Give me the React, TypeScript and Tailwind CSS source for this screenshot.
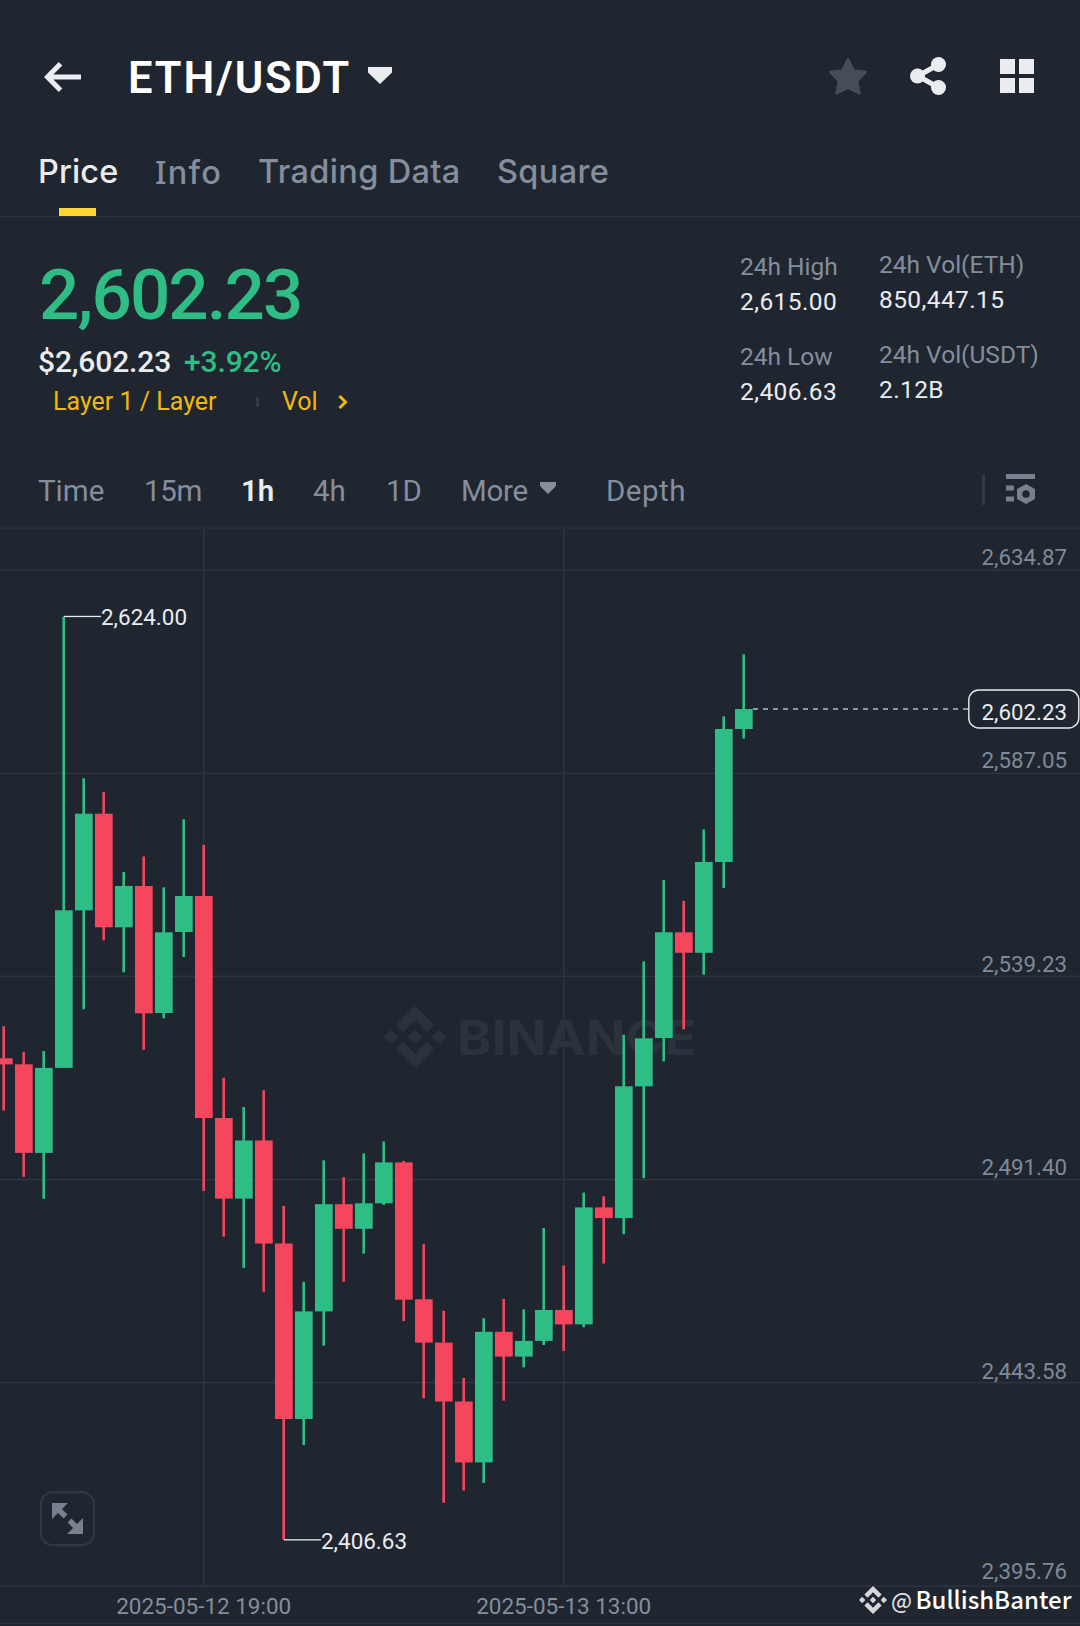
import { clsx } from 'clsx';

type Candle = {
  up: boolean;
  high: number;
  low: number;
  top: number;
  bottom: number;
};

const UP = '#2ebd85';
const DOWN = '#f6465d';

const CANDLE_STEP = 20;
const CANDLE_WIDTH = 17.7;

// [direction, high, low, body top, body bottom] in canvas units
const RAW: [number, number, number, number, number][] = [
  [0, 1026.3, 1110.6, 1058.3, 1064.4],
  [0, 1051.9, 1176.8, 1064.3, 1152.9],
  [1, 1051.1, 1198.8, 1067.9, 1152.9],
  [1, 616.5, 1067.9, 910.3, 1067.9],
  [1, 778.3, 1009.3, 813.7, 910.3],
  [0, 792, 940.3, 813.7, 927.3],
  [1, 872, 972.3, 886, 927.3],
  [0, 856.5, 1049.9, 886, 1013.3],
  [1, 887.3, 1018.3, 932.3, 1013],
  [1, 819.2, 957, 896, 932],
  [0, 845, 1190.8, 896, 1118],
  [0, 1077.8, 1236.7, 1118, 1198.6],
  [1, 1107, 1267.9, 1140.5, 1198.6],
  [0, 1090.2, 1291.8, 1140.5, 1243.5],
  [0, 1206, 1540, 1243.5, 1419],
  [1, 1281.8, 1445.1, 1311.4, 1419],
  [1, 1160.4, 1345.7, 1204.2, 1311.4],
  [0, 1177.2, 1281.8, 1204.2, 1228.8],
  [1, 1153.4, 1253.6, 1203.3, 1228.8],
  [1, 1141.5, 1205, 1162.4, 1203.3],
  [0, 1160.9, 1321.1, 1162.4, 1299.7],
  [0, 1244.1, 1398.2, 1299.3, 1342.6],
  [0, 1310.8, 1502.8, 1342.6, 1401.5],
  [0, 1378, 1490.5, 1401.5, 1462.4],
  [1, 1318.2, 1483, 1331.8, 1462.4],
  [0, 1298.9, 1400.6, 1331.8, 1356.6],
  [1, 1309.4, 1367.3, 1340.9, 1356.6],
  [1, 1228, 1345, 1310, 1340.9],
  [0, 1265.5, 1350.8, 1310, 1324.4],
  [1, 1192.6, 1327.3, 1207.4, 1324.4],
  [0, 1196.3, 1263.5, 1207.4, 1218.1],
  [1, 1034.8, 1234.2, 1086.3, 1218.1],
  [1, 961.3, 1178.2, 1038.3, 1086.3],
  [1, 880, 1061.3, 932.3, 1038],
  [0, 901, 1029.3, 932.3, 952.8],
  [1, 829.3, 974.7, 862, 952.8],
  [1, 716.3, 888, 729, 862],
  [1, 654.3, 738.7, 709, 729],
];

const CANDLES: Candle[] = RAW.map(([dir, high, low, top, bottom]) => ({
  up: dir === 1,
  high,
  low,
  top,
  bottom,
}));

const PRICE_LINES = [
  { y: 570, label: '2,634.87', baseline: 565 },
  { y: 773.3, label: '2,587.05', baseline: 768.2 },
  { y: 976.3, label: '2,539.23', baseline: 972 },
  { y: 1179.6, label: '2,491.40', baseline: 1175.3 },
  { y: 1382.6, label: '2,443.58', baseline: 1378.6 },
  { y: 1586, label: '2,395.76', baseline: 1579.2 },
];

const TIME_LINES = [
  { x: 203.7, label: '2025-05-12 19:00' },
  { x: 563.7, label: '2025-05-13 13:00' },
];

const INTERVALS = [
  { label: 'Time', className: 'w-[106px]' },
  { label: '15m', className: 'w-[97px] tracking-[-0.3px]' },
  { label: '1h', className: 'w-[72px]' },
  { label: '4h', className: 'w-[73px]' },
  { label: '1D', className: 'w-[75px]' },
];

function Header() {
  return (
    <header className="flex h-[153px] items-center pl-11 pr-[46px]">
      <svg className="h-[30px] w-[38px]" viewBox="0 0 38 30" fill="none" stroke="#eaecef" strokeWidth="5">
        <path d="M37 15H4M16.5 1.8L3.5 15l13 13.2" />
      </svg>
      <h1 className="ml-[46px] mt-[5px] text-[43.5px] font-semibold leading-none tracking-[1.9px] text-white">ETH/USDT</h1>
      <svg className="-mt-0.5 ml-[17px] h-[17px] w-6" viewBox="0 0 24 17" fill="#eaecef">
        <path d="M0 0h24v5.5L12 17 0 5.5z" />
      </svg>
      <div className="-mt-px ml-auto flex items-center">
        <svg className="h-[38px] w-[38px]" viewBox="0 0 38 38" fill="#474d57" stroke="#474d57" strokeWidth="2.4" strokeLinejoin="round">
          <path d="M19 2l5.6 11.4 12.2 1.5-8.6 9.2 2.3 12.4L19 31 7.5 36.5l2.3-12.4L1.200 14.900l12.200-1.500z" />
        </svg>
        <svg className="-mt-px ml-[43px] h-[38px] w-[37px]" viewBox="0 0 37 38" fill="#eaecef">
          <path d="M28.5 7.5L8 19l20.5 11.5" fill="none" stroke="#eaecef" strokeWidth="5" />
          <circle cx="28.5" cy="7.5" r="7.5" />
          <circle cx="7.5" cy="19" r="7.5" />
          <circle cx="28.5" cy="30.5" r="7.5" />
        </svg>
        <div className="ml-[53px] grid grid-cols-2 gap-1">
          <span className="size-[15px] bg-[#eaecef]" />
          <span className="size-[15px] bg-[#eaecef]" />
          <span className="size-[15px] bg-[#eaecef]" />
          <span className="size-[15px] bg-[#eaecef]" />
        </div>
      </div>
    </header>
  );
}

function Tabs() {
  return (
    <nav className="flex h-16 whitespace-nowrap border-b border-[#2f3641] pl-[38px] pt-[3px] font-['Inter',sans-serif] text-[32.5px] font-medium leading-8 tracking-[0.35px] text-[#848e9c]">
      <div className="flex w-[117px] flex-col text-[#eaecef]">
        <span className="tracking-[0.1px]">Price</span>
        <span className="ml-[21px] mt-auto h-2 w-[37px] bg-[#fcd535]" />
      </div>
      <div className="w-[103px] tracking-[1.2px]">
        {/* serifed capital I */}
        <span className="font-['Noto_Sans',sans-serif] leading-none">I</span>nfo
      </div>
      <div className="w-[239px]">Trading Data</div>
      <div>Square</div>
    </nav>
  );
}

function Stat({ label, value }: { label: string; value: string }) {
  return (
    <div className="whitespace-nowrap text-[24.5px] leading-[35px]">
      <div className="text-[#848e9c]">{label}</div>
      <div className="tracking-[0.4px] text-[#eaecef]">{value}</div>
    </div>
  );
}

function Summary() {
  return (
    <section className="flex h-[237px]">
      <div className="w-[740px] pl-[38px] pt-[43px]">
        <div className="ml-px text-[71px] font-medium leading-[70px] tracking-[-1.9px] text-[#2ebd85]">2,602.23</div>
        <div className="mt-3.5 flex gap-[13px] text-[30px] font-medium leading-9 tracking-[-0.15px]">
          <span className="text-[#eaecef]">$2,602.23</span>
          <span className="text-[#2ebd85]">+3.92%</span>
        </div>
        <div className="mt-1 flex items-center pl-[15px] text-[25px] leading-9 text-[#f0b90b]">
          <span className="w-[203px]">Layer 1 / Layer</span>
          <span className="mr-[23px] h-2.5 w-[3px] bg-[#333b47]" />
          <span className="w-[56px]">Vol</span>
          <svg className="h-[14px] w-[10px]" viewBox="0 0 10 14" fill="none" stroke="#f0b90b" strokeWidth="3">
            <path d="M1.5 1l6 6-6 6" />
          </svg>
        </div>
      </div>
      <div className="flex w-[139px] flex-col gap-5 pt-8">
        <Stat label="24h High" value="2,615.00" />
        <Stat label="24h Low" value="2,406.63" />
      </div>
      <div className="flex flex-col gap-5 pt-[30px]">
        <Stat label="24h Vol(ETH)" value="850,447.15" />
        <Stat label="24h Vol(USDT)" value="2.12B" />
      </div>
    </section>
  );
}

function IntervalBar() {
  return (
    <div className="flex h-[75px] items-center border-b-[3px] border-[#272d38] pl-[38px] text-[29.5px] leading-9 text-[#848e9c]">
      {INTERVALS.map((item) => (
        <span
          key={item.label}
          className={clsx('mt-0.5', item.className, item.label === '1h' && 'font-semibold text-[#eaecef]')}
        >
          {item.label}
        </span>
      ))}
      <span className="mt-0.5 w-[79px] tracking-[-0.3px]">More</span>
      <svg className="-mt-1 h-3 w-4" viewBox="0 0 16 12" fill="#848e9c">
        <path d="M0 0h16v4L8 12 0 4z" />
      </svg>
      <span className="ml-[50px] mt-0.5 tracking-[0.5px]">Depth</span>
      <div className="ml-auto flex items-center gap-[21px] pr-[45px]">
        <span className="h-[30px] w-[3px] bg-[#333b47]" />
        <svg className="-mt-0.5 h-[30px] w-[29px]" viewBox="0 0 29 30" fill="#76808f">
          <path d="M0 0h29v5H0zM0 11.5h8v5H0zM0 22.5h8v5H0z" />
          <path fillRule="evenodd" d="M20 10l9 5v10l-9 5-9-5V15zM20 16.2a3.8 3.8 0 1 0 0 7.6 3.8 3.8 0 0 0 0-7.6z" />
        </svg>
      </div>
    </div>
  );
}

function BinanceMark({ x, y, size, fill }: { x: number; y: number; size: number; fill: string }) {
  return (
    <svg x={x} y={y} width={size} height={size} viewBox="0 0 62 62" fill={fill}>
      <path d="M31 0l19 19-7 7-12-12-12 12-7-7z" />
      <path d="M31 62l19-19-7-7-12 12-12-12-7 7z" />
      <path d="M7 24l7 7-7 7-7-7zM55 24l7 7-7 7-7-7zM31 24l7 7-7 7-7-7z" />
    </svg>
  );
}

function Chart() {
  return (
    <svg className="block h-[1097px] w-[1080px]" viewBox="0 529 1080 1097" fontSize="22.5">
      {/* grid */}
      {PRICE_LINES.map((line) => (
        <rect key={line.y} x="0" y={line.y - 0.7} width="1080" height="1.4" fill="#2f3641" />
      ))}
      {TIME_LINES.map((line) => (
        <rect key={line.x} x={line.x - 0.7} y="529" width="1.4" height="1057" fill="#2f3641" />
      ))}
      <rect x="0" y="1623" width="1080" height="1.2" fill="#2f3641" />

      {/* watermark */}
      <BinanceMark x={384} y={1006} size={62} fill="#2c323c" />
      <text x="457" y="1054.5" fontSize="48" fontWeight="700" fill="#2c323c" textLength="239" lengthAdjust="spacingAndGlyphs" className="font-['Inter',sans-serif]">
        BINANCE
      </text>

      {CANDLES.map((c, i) => {
        const cx = 3.7 + i * CANDLE_STEP;
        return (
          <g key={i} fill={c.up ? UP : DOWN}>
            <rect x={cx - 1.3} y={c.high} width="2.6" height={c.low - c.high} />
            <rect x={cx - 8.7} y={c.top} width={CANDLE_WIDTH} height={c.bottom - c.top} />
          </g>
        );
      })}

      {/* high and low callouts */}
      <g fill="#eaecef">
        <rect x="64" y="615.8" width="37" height="1.3" />
        <text x="101" y="625.3" textLength="86" lengthAdjust="spacingAndGlyphs">2,624.00</text>
        <rect x="284" y="1539.2" width="37" height="1.3" />
        <text x="321" y="1549.3" textLength="86" lengthAdjust="spacingAndGlyphs">2,406.63</text>
      </g>

      {/* last price */}
      <path d="M753 709H968" stroke="#b7bdc6" strokeWidth="1.6" strokeDasharray="5 5" />
      <rect x="968.8" y="690" width="110" height="38" rx="10" fill="#1f2630" stroke="#eaecef" strokeWidth="1.4" />
      <text x="981.5" y="720" fill="#eaecef" textLength="85.5" lengthAdjust="spacingAndGlyphs">2,602.23</text>

      <g fill="#7f8997">
        {PRICE_LINES.map((line) => (
          <text key={line.label} x="981.5" y={line.baseline} textLength="85.5" lengthAdjust="spacingAndGlyphs">
            {line.label}
          </text>
        ))}
      </g>
      <g fill="#848e9c">
        {TIME_LINES.map((line) => (
          <text key={line.label} x={line.x - 87.5} y="1614" textLength="175" lengthAdjust="spacingAndGlyphs">
            {line.label}
          </text>
        ))}
      </g>

      {/* expand button */}
      <rect x="41" y="1492.2" width="53" height="53" rx="12" fill="#1f2630" stroke="#2f3641" strokeWidth="2.4" />
      <path d="M52 1503h16l-16 16zM83 1534H67l16-16z" fill="#76808f" />
      <path d="M57 1508l8.5 8.5M69.5 1520.5l8.5 8.5" stroke="#76808f" strokeWidth="5.5" />

      {/* author */}
      <BinanceMark x={859} y={1586} size={28} fill="#d6d7d9" />
      <g className="font-['Noto_Sans_CJK_SC',sans-serif]" fontWeight="500">
        <text x="891" y="1608.5" fontSize="22" fill="#dcdddf" textLength="21" lengthAdjust="spacingAndGlyphs">@</text>
        <text x="915.5" y="1608.8" fontSize="24" fill="#ffffff" textLength="156" lengthAdjust="spacingAndGlyphs">
          BullishBanter
        </text>
      </g>
    </svg>
  );
}

export default function App() {
  return (
    <main className="h-[1626px] w-[1080px] overflow-hidden bg-[#1f2630] font-['Roboto',sans-serif]">
      <Header />
      <Tabs />
      <Summary />
      <IntervalBar />
      <Chart />
    </main>
  );
}
